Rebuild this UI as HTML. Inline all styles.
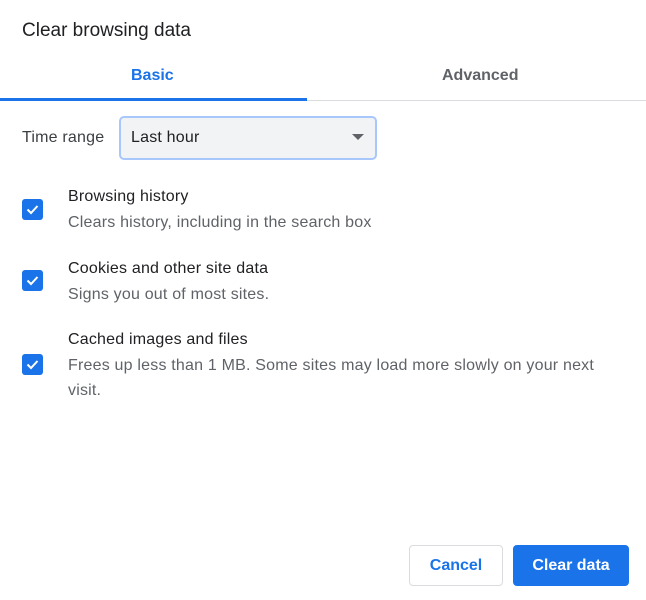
<!DOCTYPE html>
<html><head><style>
body{margin:0;width:646px;height:600px;background:#fff;font-family:"Liberation Sans",Arial,sans-serif;position:relative;overflow:hidden;color:#202124}
.a{position:absolute}
.cb{position:absolute;left:22px;width:21px;height:21px;background:#1a73e8;border-radius:3px}
.t{font-size:16px;color:#202124;letter-spacing:0.2px}
.s{font-size:16px;color:#5f6368;letter-spacing:0.2px}
</style></head><body>
<div class="a" style="left:22px;top:20px;font-size:19px">Clear browsing data</div>
<div class="a" style="left:131px;top:67px;font-size:16px;font-weight:bold;color:#1a73e8">Basic</div>
<div class="a" style="left:442px;top:67px;font-size:16px;font-weight:bold;color:#5f6368">Advanced</div>
<div class="a" style="left:0;top:100px;width:646px;height:1px;background:#dadce0"></div>
<div class="a" style="left:0;top:98px;width:307px;height:3px;background:#1a73e8"></div>
<div class="a s" style="left:22px;top:129px;color:#3c4043">Time range</div>
<div class="a" style="left:119px;top:116px;width:254px;height:40px;background:#f1f3f4;border:2px solid #a8c7fa;border-radius:5px"></div>
<div class="a t" style="left:131px;top:129px">Last hour</div>
<div class="a" style="left:352px;top:134px;width:0;height:0;border-left:6px solid transparent;border-right:6px solid transparent;border-top:6px solid #5f6368"></div>

<div class="cb" style="top:199px"><svg width="21" height="21"><path d="M5.5 10.5l3.5 3.5 6.5-7" stroke="#fff" stroke-width="2" fill="none"/></svg></div>
<div class="a t" style="left:68px;top:188px">Browsing history</div>
<div class="a s" style="left:68px;top:214px">Clears history, including in the search box</div>

<div class="cb" style="top:270px"><svg width="21" height="21"><path d="M5.5 10.5l3.5 3.5 6.5-7" stroke="#fff" stroke-width="2" fill="none"/></svg></div>
<div class="a t" style="left:68px;top:260px">Cookies and other site data</div>
<div class="a s" style="left:68px;top:286px">Signs you out of most sites.</div>

<div class="cb" style="top:354px"><svg width="21" height="21"><path d="M5.5 10.5l3.5 3.5 6.5-7" stroke="#fff" stroke-width="2" fill="none"/></svg></div>
<div class="a t" style="left:68px;top:331px">Cached images and files</div>
<div class="a s" style="left:68px;top:353px;line-height:25px;width:535px">Frees up less than 1 MB. Some sites may load more slowly on your next visit.</div>

<div class="a" style="left:409px;top:545px;width:92px;height:39px;border:1px solid #dadce0;border-radius:4px;color:#1a73e8;font-weight:bold;font-size:16px;text-align:center;line-height:39px">Cancel</div>
<div class="a" style="left:513px;top:545px;width:116px;height:41px;background:#1a73e8;border-radius:4px;color:#fff;font-weight:bold;font-size:16px;text-align:center;line-height:41px">Clear data</div>
</body></html>
